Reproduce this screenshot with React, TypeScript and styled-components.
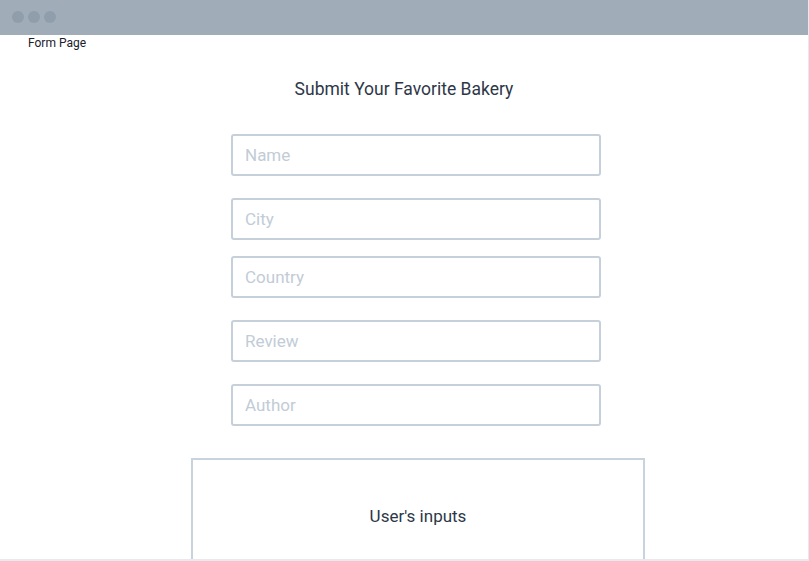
import React from "react";
import styled, { createGlobalStyle } from "styled-components";

const Global = createGlobalStyle`
  html, body { margin: 0; padding: 0; background: #e6eaee; }
  body { font-family: Roboto, "Noto Sans", sans-serif; }
  * { box-sizing: border-box; }
`;

const Window = styled.div`
  width: 808px;
  height: 559px;
  background: #ffffff;
  overflow: hidden;
  display: flex;
  flex-direction: column;
`;

const TitleBar = styled.div`
  height: 35px;
  background: #a0adb9;
  display: flex;
  align-items: center;
  gap: 4px;
  padding: 0 0 2px 12px;
  flex-shrink: 0;
`;

const Dot = styled.span`
  width: 12px;
  height: 12px;
  border-radius: 50%;
  background: #909dab;
`;

const PageLabel = styled.div`
  font-size: 12px;
  color: #1a202c;
  padding-left: 28px;
  line-height: 16px;
`;

const Content = styled.div`
  display: flex;
  flex-direction: column;
  align-items: center;
`;

const Heading = styled.h1`
  margin: 28px 0 0;
  font-size: 17.5px;
  font-weight: 400;
  color: #2d3748;
  line-height: 20px;
`;

const Shifted = styled.div`
  display: flex;
  flex-direction: column;
  align-items: center;
  margin-left: 24px;
`;

const Form = styled.form`
  display: flex;
  flex-direction: column;
  margin-top: 35px;
`;

const Input = styled.input<{ $gap: number }>`
  width: 370px;
  height: 42px;
  margin-top: ${(p) => p.$gap}px;
  border: 2px solid #c6d0da;
  border-radius: 3px;
  padding: 0 12px;
  font-family: Roboto, "Noto Sans", sans-serif;
  font-size: 17px;
  color: #2d3748;
  outline: none;
  &::placeholder { color: #c2ccd6; }
`;

const Output = styled.div`
  margin-top: 32px;
  margin-left: 4px;
  width: 454px;
  height: 110px;
  border: 2px solid #c8d3dd;
  border-bottom: none;
  display: flex;
  align-items: center;
  justify-content: center;
  padding-top: 4px;
  font-size: 17px;
  color: #2d3748;
  flex-shrink: 0;
`;

const fields = [
  { name: "Name", gap: 0 },
  { name: "City", gap: 22 },
  { name: "Country", gap: 16 },
  { name: "Review", gap: 22 },
  { name: "Author", gap: 22 },
];

export default function App() {
  return (
    <>
      <Global />
      <Window>
        <TitleBar>
          <Dot />
          <Dot />
          <Dot />
        </TitleBar>
        <PageLabel>Form Page</PageLabel>
        <Content>
          <Heading>Submit Your Favorite Bakery</Heading>
          <Shifted>
            <Form onSubmit={(e) => e.preventDefault()}>
              {fields.map((f) => (
                <Input key={f.name} placeholder={f.name} $gap={f.gap} />
              ))}
            </Form>
            <Output>User's inputs</Output>
          </Shifted>
        </Content>
      </Window>
    </>
  );
}
